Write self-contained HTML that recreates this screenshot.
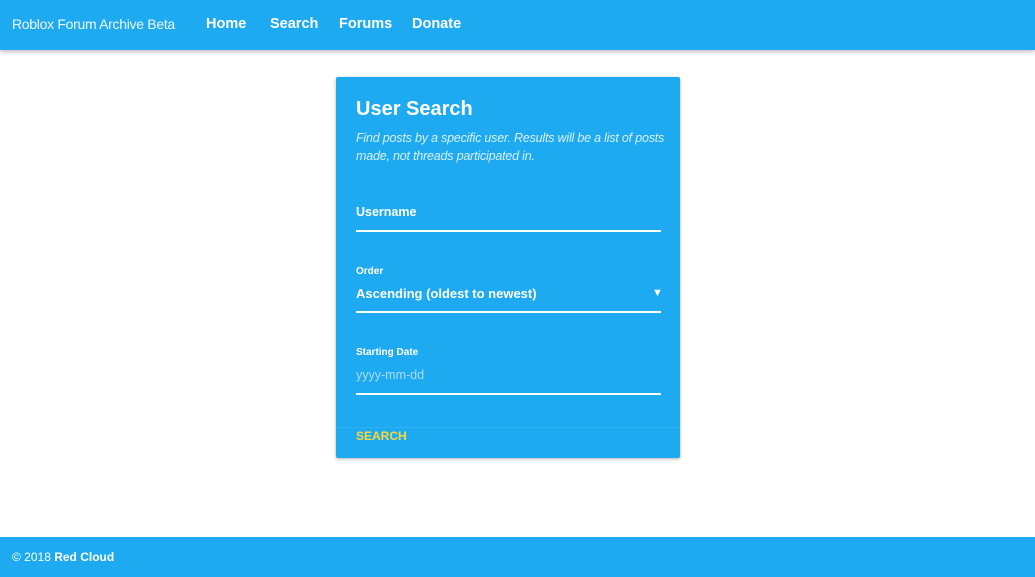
<!DOCTYPE html>
<html><head><style>
*{margin:0;padding:0;box-sizing:border-box}
body{width:1035px;height:577px;background:#fff;font-family:"Liberation Sans",sans-serif;position:relative;overflow:hidden}
.nav{position:absolute;left:0;top:0;width:1035px;height:50px;background:#1eaaf1;box-shadow:0 2px 4px rgba(0,0,0,.25);color:#fff}
.nav span{position:absolute;top:16px;font-size:15px}
.card{position:absolute;left:336px;top:77px;width:344px;height:381px;background:#1eaaf1;box-shadow:0 1px 3px rgba(0,0,0,.3);border-radius:2px;color:#fff}
.card div{position:absolute}
.line{left:20px;width:305px;height:2px;background:#fff}
.foot{position:absolute;left:0;top:537px;width:1035px;height:40px;background:#1eaaf1;color:#fff;font-size:12px;padding:13px 12px}
</style></head><body>
<div class="nav">
<span style="left:12px;font-size:14px;letter-spacing:-0.3px;color:#eef8ff">Roblox Forum Archive Beta</span>
<span style="left:206px;font-weight:bold;font-size:14.5px">Home</span>
<span style="left:270px;font-weight:bold;font-size:14.5px">Search</span>
<span style="left:339px;font-weight:bold;font-size:14.5px">Forums</span>
<span style="left:412px;font-weight:bold;font-size:14.5px">Donate</span>
</div>
<div class="card">
<div style="left:20px;top:21px;font-size:20px;font-weight:bold">User Search</div>
<div style="left:20px;top:52px;width:320px;font-size:12.5px;font-style:italic;line-height:18px;letter-spacing:-0.2px;color:#d8efff">Find posts by a specific user. Results will be a list of posts made, not threads participated in.</div>
<div style="left:20px;top:128px;font-size:12.5px;font-weight:bold">Username</div>
<div class="line" style="top:153px"></div>
<div style="left:20px;top:189px;font-size:10px;font-weight:bold">Order</div>
<div style="left:20px;top:209px;font-size:13px;font-weight:bold">Ascending (oldest to newest)</div>
<div style="left:316px;top:210px;font-size:11px">▼</div>
<div class="line" style="top:234px"></div>
<div style="left:20px;top:270px;font-size:10px;font-weight:bold">Starting Date</div>
<div style="left:20px;top:291px;font-size:12.5px;color:#a8dcfa">yyyy-mm-dd</div>
<div class="line" style="top:316px"></div>
<div style="left:0;top:350px;width:344px;height:1px;background:rgba(255,255,255,.08)"></div>
<div style="left:20px;top:352px;font-size:12px;font-weight:bold;color:#fdd835">SEARCH</div>
</div>
<div class="foot">© 2018 <b>Red Cloud</b></div>
</body></html>
